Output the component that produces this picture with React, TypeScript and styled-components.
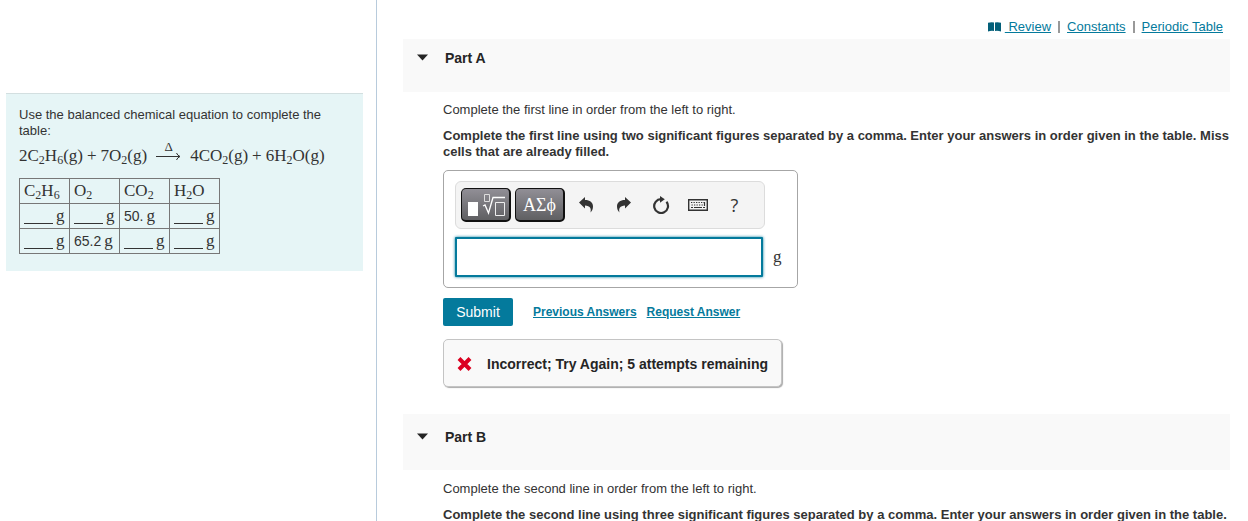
import React from 'react';
import styled, { createGlobalStyle } from 'styled-components';

const sans = '"Liberation Sans", Arial, sans-serif';
const serif = '"Liberation Serif", "Times New Roman", serif';
const teal = '#047a9c';

const GlobalStyle = createGlobalStyle`
  *, *::before, *::after { box-sizing: border-box; }
  body { margin: 0; background: #fff; color: #333; font: 13px/16px ${sans}; }
  p, h2 { margin: 0; }
`;

const Page = styled.div`
  display: flex;
  height: 100vh;
  overflow: hidden;
`;

const ProblemPane = styled.aside`
  flex: 0 0 377px;
  padding: 93px 13px 0 6px;
  border-right: 1px solid #b8cbdc;
`;

const ProblemCard = styled.section`
  padding: 13px 12px 17px 13px;
  border-top: 1px solid #d3dfe0;
  background: #e6f5f6;
`;

const Equation = styled.div`
  display: flex;
  align-items: center;
  gap: 4px;
  margin: 3px 0 8px;
  font: 17px/20px ${serif};
  white-space: nowrap;
`;

const Sub = styled.sub`
  font-size: 12px;
  line-height: 0;
  vertical-align: -3px;
`;

const Formula = styled.span`
  font: 17px/20px ${serif};
`;

const ReactionArrow = styled.span`
  display: flex;
  flex-direction: column;
  align-items: center;
  margin: 0 5px;
  height: 28px;
  font: 13px/10px ${serif};

  svg { flex-shrink: 0; }
`;

const DataTable = styled.table`
  border-collapse: collapse;
  table-layout: fixed;
  width: 201px;
`;

const cell = `
  height: 25px;
  padding: 0 4px;
  border: 1px solid #777;
  font-weight: 400;
  text-align: left;
  white-space: nowrap;
  line-height: 20px;
`;
const HeadCell = styled.th`${cell}`;
const Cell = styled.td`${cell}`;

const CellContent = styled.span`
  display: flex;
  align-items: baseline;
  gap: 3px;
`;

const Value = styled.span`
  font-size: 14px;
`;

const Blank = styled.span`
  width: 29px;
  height: 1px;
  background: #333;
  align-self: flex-end;
  margin-bottom: 2px;
`;

const Unit = styled.span`
  font: 17px/20px ${serif};
`;

const Main = styled.main`
  flex: 1;
  min-width: 0;
  padding: 19px 18px 0 26px;
`;

const Resources = styled.nav`
  display: flex;
  justify-content: flex-end;
  align-items: center;
  gap: 7px;
  padding-right: 7px;
  height: 16px;
  margin-bottom: 4px;
`;

const BookIcon = styled.svg`
  margin-right: -3px;
`;

const Link = styled.a<{ $bold?: boolean }>`
  color: ${teal};
  font-size: ${(p) => (p.$bold ? '12px' : '13px')};
  font-weight: ${(p) => (p.$bold ? 700 : 400)};
  text-decoration: underline;
  white-space: pre;
`;

const Divider = styled.span`
  width: 2px;
  height: 12px;
  background: #999;
`;

const PartHeader = styled.header<{ $first?: boolean }>`
  display: flex;
  align-items: center;
  gap: 17px;
  height: ${(p) => (p.$first ? '53px' : '56px')};
  padding: 0 14px ${(p) => (p.$first ? '16px' : '11px')};
  background: #f9f9f9;
`;

const Toggle = styled.button`
  display: flex;
  width: 11px;
  padding: 0;
  border: 0;
  background: none;
`;

const PartTitle = styled.h2`
  color: #252525;
  font: 700 14px/18px ${sans};
`;

const PartBody = styled.div<{ $first?: boolean }>`
  padding: ${(p) => (p.$first ? '10px' : '11px')} 0 27px 40px;
`;

const Instruction = styled.p<{ $strong?: boolean }>`
  margin-bottom: 10px;
  font-weight: ${(p) => (p.$strong ? 700 : 400)};
  margin-right: ${(p) => (p.$strong ? '-4px' : '0')};
`;

const AnswerBox = styled.div`
  width: 355px;
  padding: 10px 11px;
  border: 1px solid #a6a6a6;
  border-radius: 5px;
`;

const Toolbar = styled.div`
  display: flex;
  align-items: center;
  width: 310px;
  height: 48px;
  padding: 0 5px;
  border: 1px solid #dcdcdc;
  border-radius: 6px;
  background: #f4f4f4;
`;

const PaletteButton = styled.button`
  display: flex;
  align-items: center;
  justify-content: center;
  width: 50px;
  height: 34px;
  margin-right: 4px;
  padding: 0;
  border: solid #111;
  border-width: 1px 2px 2px 1px;
  border-radius: 5px;
  background: linear-gradient(#918f96, #5f5f62);
  color: #fff;
  font: 18px/20px ${serif};
`;

const ToolButton = styled.button`
  display: flex;
  align-items: center;
  justify-content: center;
  width: 37px;
  height: 34px;
  padding: 0 2px 0 0;
  border: 0;
  background: none;
  color: #333;
  font: 18px/20px "Open Sans", ${sans};
`;

const AnswerRow = styled.div`
  display: flex;
  align-items: center;
  gap: 10px;
  margin-top: 8px;
`;

const AnswerInput = styled.input`
  width: 308px;
  height: 40px;
  padding: 0 8px;
  border: 2px solid ${teal};
  border-radius: 1px;
  outline: none;
  box-shadow: 0 0 3px ${teal};
  background: #fff;
`;

const Actions = styled.div`
  display: flex;
  align-items: center;
  gap: 10px;
  margin: 10px 0 13px;
`;

const SubmitButton = styled.button`
  width: 70px;
  height: 28px;
  margin-right: 10px;
  padding: 0;
  border: 0;
  border-radius: 2px;
  background: ${teal};
  color: #fff;
  font: 14px/18px ${sans};
`;

const Feedback = styled.div`
  display: inline-flex;
  align-items: center;
  gap: 15px;
  height: 48px;
  padding: 2px 13px 0;
  border: 1px solid #c4c4c4;
  border-radius: 5px;
  background: #f9f9f9;
  box-shadow: 1px 1px 1px #aaa;
  color: #252525;
  font: 700 14px/18px ${sans};
`;

const Caret = () => (
  <svg width="11" height="7" viewBox="0 0 11 7" aria-hidden="true">
    <path d="M0 .5h11L5.500 6.500z" fill="#252525" />
  </svg>
);

const C2H6 = () => <>C<Sub>2</Sub>H<Sub>6</Sub></>;
const H2O = () => <>H<Sub>2</Sub>O</>;

const BlankGrams = () => (
  <CellContent><Blank /><Unit>g</Unit></CellContent>
);
const Grams = ({ value }: { value: string }) => (
  <CellContent><Value>{value}</Value><Unit>g</Unit></CellContent>
);

const Part = ({ title, first, children }: { title: string; first?: boolean; children: React.ReactNode }) => (
  <section>
    <PartHeader $first={first}>
      <Toggle type="button" aria-label={`Collapse ${title}`}><Caret /></Toggle>
      <PartTitle>{title}</PartTitle>
    </PartHeader>
    <PartBody $first={first}>{children}</PartBody>
  </section>
);

export default function App() {
  return (
    <Page>
      <GlobalStyle />
      <ProblemPane>
        <ProblemCard>
          <p>Use the balanced chemical equation to complete the table:</p>
          <Equation>
            <span>2<C2H6 />(g)</span>
            <span>+</span>
            <span>7O<Sub>2</Sub>(g)</span>
            <ReactionArrow>
              Δ
              <svg width="25" height="9" viewBox="0 0 25 9" fill="none" stroke="#333" aria-hidden="true">
                <path d="M0 4.500h24M20.500 1q1 2.500 3.500 3.500q-2.500 1-3.500 3.500" />
              </svg>
            </ReactionArrow>
            <span>4CO<Sub>2</Sub>(g)</span>
            <span>+</span>
            <span>6<H2O />(g)</span>
          </Equation>
          <DataTable>
            <thead>
              <tr>
                <HeadCell><Formula><C2H6 /></Formula></HeadCell>
                <HeadCell><Formula>O<Sub>2</Sub></Formula></HeadCell>
                <HeadCell><Formula>CO<Sub>2</Sub></Formula></HeadCell>
                <HeadCell><Formula><H2O /></Formula></HeadCell>
              </tr>
            </thead>
            <tbody>
              <tr>
                <Cell><BlankGrams /></Cell>
                <Cell><BlankGrams /></Cell>
                <Cell><Grams value="50." /></Cell>
                <Cell><BlankGrams /></Cell>
              </tr>
              <tr>
                <Cell><BlankGrams /></Cell>
                <Cell><Grams value="65.2" /></Cell>
                <Cell><BlankGrams /></Cell>
                <Cell><BlankGrams /></Cell>
              </tr>
            </tbody>
          </DataTable>
        </ProblemCard>
      </ProblemPane>

      <Main>
        <Resources>
          <BookIcon width="13" height="10" viewBox="0 0 13 10" fill="#035f79" aria-hidden="true">
            <path d="M0 .8Q3 0 6 .5V9Q3 8.500 0 9.500zM7 .5Q10 0 13 .8V9.500Q10 8.500 7 9z" />
          </BookIcon>
          <Link href="#review"> Review</Link>
          <Divider />
          <Link href="#constants">Constants</Link>
          <Divider />
          <Link href="#periodic-table">Periodic Table</Link>
        </Resources>

        <Part title="Part A" first>
          <Instruction>Complete the first line in order from the left to right.</Instruction>
          <Instruction $strong>
            Complete the first line using two significant figures separated by a comma. Enter your answers in order
            given in the table. Miss cells that are already filled.
          </Instruction>
          <AnswerBox>
            <Toolbar>
              <PaletteButton type="button" aria-label="Templates">
                <svg width="38" height="24" viewBox="0 0 38 24" fill="none" stroke="#fff" aria-hidden="true">
                  <path d="M1 9h10v14H1z" fill="#fff" stroke="none" />
                  <path d="M17.500 1.500h5v7h-5z" stroke="#ddd" />
                  <path d="M28.500 9.500h9v13h-9z" stroke="#eee" />
                  <path d="M16 13l2-1 3.500 8L26 4.500h12" strokeWidth="1.300" />
                </svg>
              </PaletteButton>
              <PaletteButton type="button" aria-label="Symbols">ΑΣϕ</PaletteButton>
              <ToolButton type="button" aria-label="Undo">
                <svg width="15" height="16" viewBox="0 0 15 16" fill="#333" aria-hidden="true">
                  <path d="M0 5.500L6 0v3C11 3 14 5.500 14 9.500c0 2.500-1 4.500-2.500 6C12.500 11 11 9 6 8.500v3z" />
                </svg>
              </ToolButton>
              <ToolButton type="button" aria-label="Redo">
                <svg width="15" height="16" viewBox="0 0 15 16" fill="#333" aria-hidden="true">
                  <path d="M15 5.500L9 0v3C4 3 1 5.500 1 9.500c0 2.500 1 4.500 2.500 6C2.500 11 4 9 9 8.500v3z" />
                </svg>
              </ToolButton>
              <ToolButton type="button" aria-label="Reset">
                <svg width="18" height="18" viewBox="0 0 18 18" aria-hidden="true">
                  <path d="M9 3.200A6.900 6.900 0 1 0 14.500 5.800" fill="none" stroke="#333" strokeWidth="2.200" />
                  <path d="M8 0L12.800 3.300L8 6.800z" fill="#333" />
                </svg>
              </ToolButton>
              <ToolButton type="button" aria-label="Keyboard shortcuts">
                <svg width="20" height="12" viewBox="0 0 20 12" fill="none" stroke="#333" aria-hidden="true">
                  <path d="M.7.700h18.600v10.600H.7z" strokeWidth="1.400" />
                  <path d="M3 3.500h14M3.500 6h13" strokeWidth="1.200" strokeDasharray="1.300 1.200" />
                  <path d="M3 8.500h2M6 8.500h8M15 8.500h2M16.500 3v4" strokeWidth="1.200" />
                </svg>
              </ToolButton>
              <ToolButton type="button" aria-label="Help">?</ToolButton>
            </Toolbar>
            <AnswerRow>
              <AnswerInput type="text" aria-label="Answer in grams" />
              <Unit>g</Unit>
            </AnswerRow>
          </AnswerBox>
          <Actions>
            <SubmitButton type="button">Submit</SubmitButton>
            <Link $bold href="#previous-answers">Previous Answers</Link>
            <Link $bold href="#request-answer">Request Answer</Link>
          </Actions>
          <Feedback role="status">
            <svg width="15" height="14" viewBox="0 0 15 14" fill="none" stroke="#db0020" strokeWidth="4" aria-hidden="true">
              <path d="M2 1.500L13 12.500M13 1.500L2 12.500" />
            </svg>
            Incorrect; Try Again; 5 attempts remaining
          </Feedback>
        </Part>

        <Part title="Part B">
          <Instruction>Complete the second line in order from the left to right.</Instruction>
          <Instruction $strong>
            Complete the second line using three significant figures separated by a comma. Enter your answers in order
            given in the table.
          </Instruction>
        </Part>
      </Main>
    </Page>
  );
}
